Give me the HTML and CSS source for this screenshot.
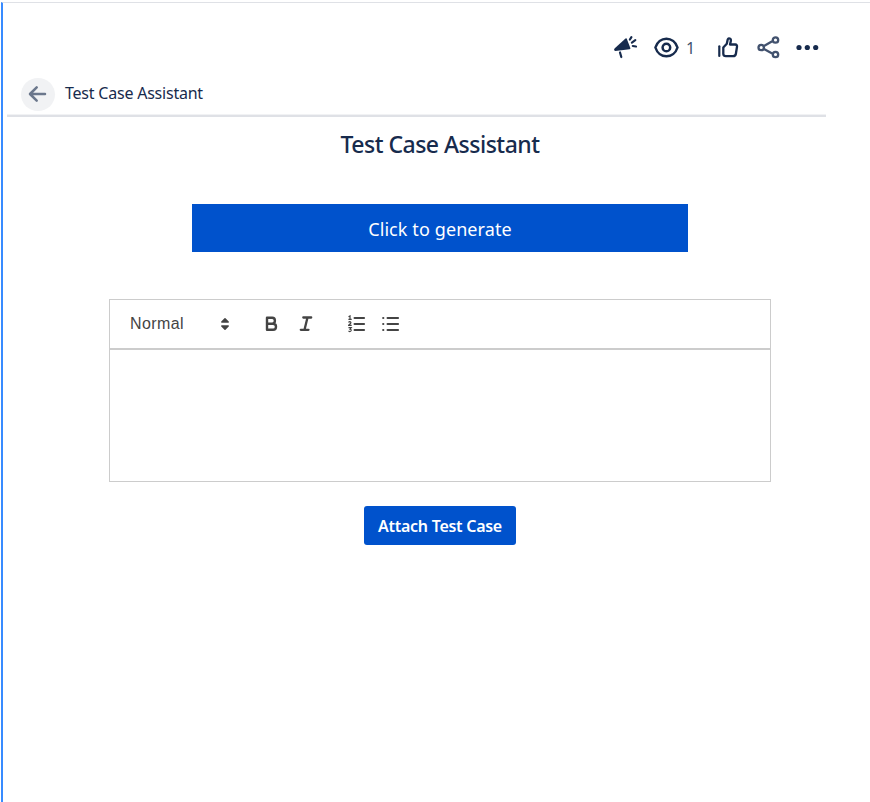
FILE: index.html
```
<!DOCTYPE html>
<html lang="en">
<head>
    <meta charset="UTF-8">
    <meta name="viewport" content="width=device-width, initial-scale=1.0">
    <title>Test Case Assistant</title>
    <link rel="stylesheet" href="styles.css">
</head>
<body>
    <div class="panel">
        <div class="actions">
            <svg class="icon feedback" width="24" height="24" viewBox="0 0 24 24">
                <path d="M.8 13.200 11.500 3.500q.9-.6 1.300.3L16.300 13q.3 1-.8 1.200L1.300 15.900Q-.8 15.200.8 13.200z" fill="#172b4d"/>
                <path d="M6 17.500 7.300 22M15.900 4.500 17.400 2.200M17.900 7.600 21.300 5.200M18.800 11 22 11.500" fill="none" stroke="#172b4d" stroke-width="2.200" stroke-linecap="round"/>
            </svg>
            <svg class="icon watch" width="26" height="24" viewBox="0 0 26 24">
                <path d="M1.400 12.500C3.100 7 7.600 3.700 12.400 3.700S21.800 7 23.500 12.500C21.800 18 17.200 21.200 12.400 21.200S3.100 18 1.400 12.500z" fill="none" stroke="#172b4d" stroke-width="2.500" stroke-linejoin="round"/>
                <circle cx="12.400" cy="12.500" r="3.800" fill="none" stroke="#172b4d" stroke-width="2.500"/>
            </svg>
            <span class="count">1</span>
            <svg class="icon like" width="22" height="24" viewBox="0 0 22 24">
                <path d="M2.300 11.300V21" fill="none" stroke="#172b4d" stroke-width="2.200" stroke-linecap="round"/>
                <path d="M6.300 12.500 9.800 8.800 10.700 4.500Q11.200 3 12.700 3.500 14.300 4.100 13.800 6.200L13 9.500H18.200Q20.400 9.700 20 11.800L18.900 18.800Q18.500 21.200 16.100 21.200H8.800Q6.500 21.200 6.300 19z" fill="none" stroke="#172b4d" stroke-width="2.300" stroke-linejoin="round"/>
            </svg>
            <svg class="icon share" width="24" height="24" viewBox="0 0 24 24">
                <path d="M7 11 15.200 6.300M7 14 15.200 18.500" fill="none" stroke="#42526e" stroke-width="2.300"/>
                <g fill="none" stroke="#42526e" stroke-width="2.300">
                    <circle cx="4.200" cy="12.500" r="2.700"/>
                    <circle cx="18.500" cy="5" r="2.700"/>
                    <circle cx="18.500" cy="19.500" r="2.700"/>
                </g>
            </svg>
            <svg class="icon more" width="24" height="24" viewBox="0 0 24 24" fill="#172b4d">
                <circle cx="4" cy="12.500" r="2.600"/>
                <circle cx="12.300" cy="12.500" r="2.600"/>
                <circle cx="20.700" cy="12.500" r="2.600"/>
            </svg>
        </div>

        <div class="breadcrumb">
            <button class="back" aria-label="Back">
                <svg width="20" height="20" viewBox="0 0 20 20">
                    <path d="M17 10H3M8.700 3.300 2 10 8.700 16.700" fill="none" stroke="#6b778c" stroke-width="2.500" stroke-linecap="round" stroke-linejoin="round"/>
                </svg>
            </button>
            <span class="crumb">Test Case Assistant</span>
        </div>

        <div class="content">
            <h2 class="title">Test Case Assistant</h2>
            <button class="generate">Click to generate</button>

            <div class="editor">
                <div class="toolbar">
                    <div class="picker">
                        <span>Normal</span>
                        <svg width="18" height="18" viewBox="0 0 18 18" fill="#444" stroke="#444" stroke-width="1.500" stroke-linejoin="round">
                            <path d="M5.800 7 9 3.800 12.200 7zM5.800 11 9 14.200 12.200 11z"/>
                        </svg>
                    </div>
                    <svg class="tool bold" width="18" height="18" viewBox="0 0 18 18">
                        <path d="M5 8.700H11M5 2.700H10.200Q12.900 2.700 12.900 5.700T10.200 8.700H11Q14 8.700 14 11.700T11 14.800H5z" fill="none" stroke="#444" stroke-width="2.400" stroke-linejoin="round"/>
                    </svg>
                    <svg class="tool italic" width="18" height="18" viewBox="0 0 18 18">
                        <path d="M6.300 2.500H14.200M3.800 14.800H11.500M10.500 2.500 7.500 14.800" fill="none" stroke="#444" stroke-width="2.300" stroke-linecap="round"/>
                    </svg>
                    <svg class="tool ordered" width="18" height="18" viewBox="0 0 18 18">
                        <path d="M6.600 3H16M6.600 9H16M6.600 15H16" fill="none" stroke="#444" stroke-width="2.200" stroke-linecap="round"/>
                        <path d="M.5 1.700 2 .9V4.200M.4 4.300H3.700M.6 7.500Q1 6.500 2.200 6.700 3.400 7.200 2.500 8.500L.6 10.300H3.700M.5 12.700H3.200L2 14.200Q3.400 14.400 3.100 15.700 2.200 17.100.5 16.100" fill="none" stroke="#444" stroke-width="1.200"/>
                    </svg>
                    <svg class="tool bullet" width="18" height="18" viewBox="0 0 18 18">
                        <path d="M5.600 3H16M5.600 9H16M5.600 15H16M1.200 3H1.300M1.200 9H1.300M1.200 15H1.300" fill="none" stroke="#444" stroke-width="2.200" stroke-linecap="round"/>
                    </svg>
                </div>
                <div class="text-area" contenteditable="true"></div>
            </div>

            <button class="attach">Attach Test Case</button>
        </div>
    </div>
</body>
</html>
```

FILE: styles.css
```
* {
    box-sizing: border-box;
}
body {
    margin: 0;
    padding: 2px 0 0 1px;
    background: #fff;
    color: #172b4d;
    font-family: "Segoe UI", "Noto Sans", sans-serif;
    overflow: hidden;
}
svg {
    display: block;
    flex: none;
}
button {
    border: none;
    font-family: inherit;
    cursor: pointer;
}
.panel {
    height: 800px;
    border-top: 1px solid #dfe1e6;
    border-left: 2px solid #388bff;
}
.actions {
    display: flex;
    align-items: center;
    height: 24px;
    margin: 32px 0 0 611px;
}
.watch {
    margin-left: 16px;
}
.count {
    width: 10px;
    margin-left: 6px;
    font-size: 16px;
    line-height: 24px;
    padding-top: 1px;
    color: #42526e;
}
.like {
    margin-left: 21px;
}
.share {
    margin-left: 18px;
}
.more {
    margin-left: 14px;
}
.breadcrumb {
    display: flex;
    align-items: center;
    width: 819px;
    height: 58px;
    margin-left: 4px;
    padding: 14px 0 0 14px;
    border-bottom: 2px solid #dfe1e6;
    box-shadow: inset 0 -1px #f1f2f4;
}
.back {
    display: flex;
    align-items: center;
    justify-content: center;
    width: 34px;
    height: 33px;
    padding: 0;
    border-radius: 50%;
    background: #f1f2f4;
}
.crumb {
    margin: -3px 0 0 10px;
    font-size: 16px;
    letter-spacing: -0.22px;
}
.content {
    display: flex;
    flex-direction: column;
    align-items: center;
    width: 662px;
    margin-left: 106px;
}
.title {
    margin: 11px 0 44px;
    font-size: 23px;
    font-weight: 500;
    line-height: 32px;
    letter-spacing: -0.5px;
}
.generate {
    width: 496px;
    height: 48px;
    padding: 2px 0 0;
    background: #0052cc;
    color: #fff;
    font-size: 18px;
    letter-spacing: 0.1px;
}
.editor {
    width: 100%;
    height: 183px;
    margin: 47px 0 24px;
    border: 1px solid #ccc;
}
.toolbar {
    display: flex;
    align-items: center;
    height: 50px;
    padding-left: 20px;
    border-bottom: 2px solid #ccc;
}
.picker {
    display: flex;
    align-items: center;
    justify-content: space-between;
    width: 104px;
    color: #444;
    font-family: "Liberation Sans", Arial, sans-serif;
    font-size: 16px;
    letter-spacing: 0.4px;
}
.bold {
    margin-left: 28px;
}
.italic {
    margin-left: 17px;
}
.ordered {
    margin-left: 33px;
}
.bullet {
    margin-left: 16px;
}
.text-area {
    height: 131px;
}
.attach {
    width: 152px;
    height: 39px;
    padding: 0;
    border-radius: 3px;
    background: #0052cc;
    color: #fff;
    font-size: 16px;
    font-weight: 600;
    letter-spacing: -0.27px;
}
```
